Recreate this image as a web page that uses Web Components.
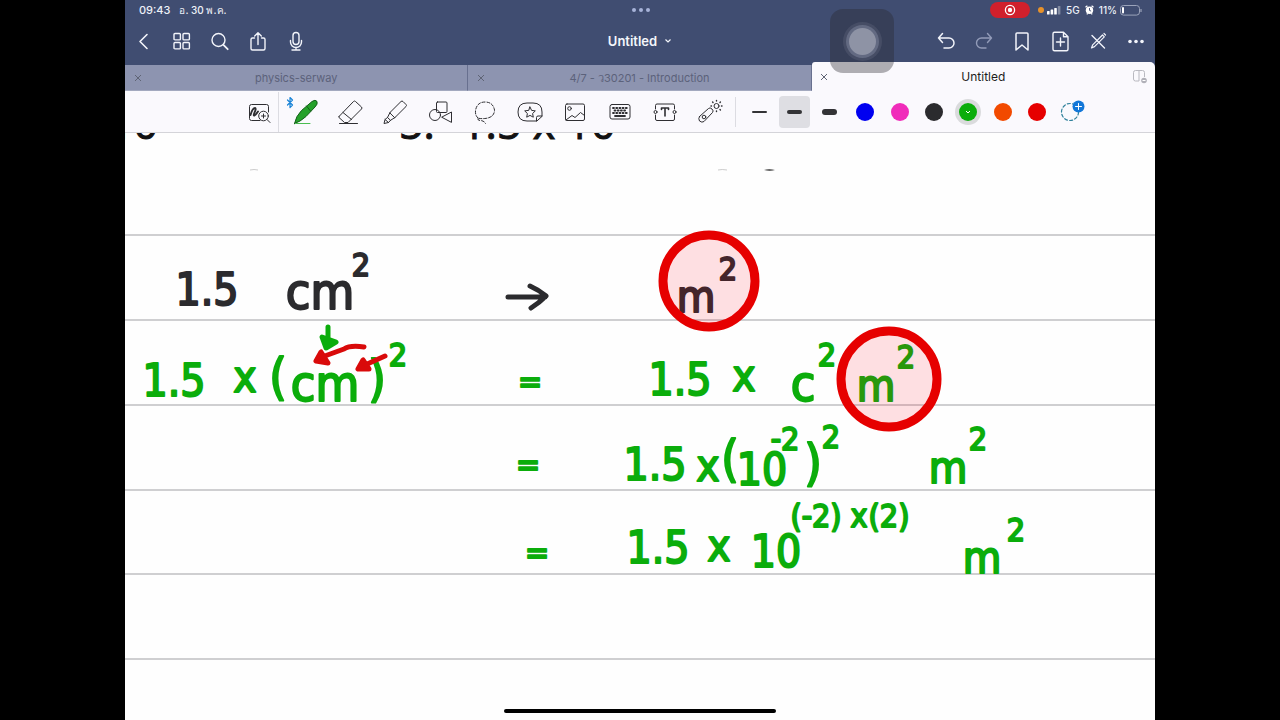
<!DOCTYPE html>
<html lang="th">
<head>
<meta charset="utf-8">
<title>Untitled</title>
<style>
  body { margin: 0; background: #000; font-family: Inter, "Noto Sans", sans-serif; }
</style>
</head>
<body>
<note-app></note-app>
<script>
const define = (name, html) => {
  const template = document.createElement('template');
  template.innerHTML = html;
  customElements.define(name, class extends HTMLElement {
    constructor() {
      super();
      this.attachShadow({ mode: 'open' }).append(template.content.cloneNode(true));
    }
    connectedCallback() {
      const button = this.shadowRoot.querySelector('button');
      if (button && this.hasAttribute('label')) button.setAttribute('aria-label', this.getAttribute('label'));
    }
  });
};

define('icon-button', `
<style>
  :host { display: block; flex: none; width: 38px; height: 38px; color: #f2f4fa; }
  button { all: unset; box-sizing: border-box; width: 100%; height: 100%; display: grid; place-items: center; }
  ::slotted(svg) { display: block; width: 24px; height: 24px; overflow: visible; fill: none; stroke: currentColor; stroke-width: 1.4; stroke-linecap: round; stroke-linejoin: round; }
</style>
<button type="button"><slot></slot></button>`);

define('status-bar', `
<style>
  :host { display: grid; grid-template-columns: 1fr auto 1fr; align-items: center; height: 20px; padding: 0 13px 0 14px; color: #eef1f8; font-size: 11px; font-weight: 500; }
  .left { display: flex; gap: 9px; align-items: baseline; line-height: 20px; }
  .left span:last-child { font-size: 10px; }
  .dots { display: flex; gap: 3px; }
  .dots i { width: 4px; height: 4px; border-radius: 50%; background: #a7b3d9; }
  .right { display: flex; justify-content: flex-end; align-items: center; gap: 5px; font-size: 10px; }
  .rec { width: 40px; height: 16px; border-radius: 8px; background: #d0202c; display: grid; place-items: center; margin-right: 3px; }
  .mic { width: 6px; height: 6px; border-radius: 50%; background: #e8922a; margin-right: -2px; }
  svg { display: block; }
  .bat { margin-left: -2px; }
</style>
<div class="left"><span>09:43</span><span>อ. 30 พ.ค.</span></div>
<div class="dots"><i></i><i></i><i></i></div>
<div class="right">
  <span class="rec"><svg width="12" height="12" viewBox="0 0 12 12"><circle cx="6" cy="6" r="4.6" fill="none" stroke="#fff" stroke-width="1.3"/><circle cx="6" cy="6" r="2.2" fill="#fff"/></svg></span>
  <i class="mic"></i>
  <svg width="14" height="9" viewBox="0 0 14 9"><g fill="#fff"><rect y="5" width="2.6" height="3.5" rx=".6"/><rect x="3.6" y="3.5" width="2.6" height="5" rx=".6"/><rect x="7.2" y="2" width="2.6" height="6.5" rx=".6"/><rect x="10.8" width="2.6" height="8.5" rx=".6" opacity=".35"/></g></svg>
  <span>5G</span>
  <svg width="9" height="10" viewBox="0 0 9 10"><circle cx="4.5" cy="5.2" r="3.7" fill="#fff"/><path d="M.5 2.2 2.4.8M8.5 2.2 6.6.8M1.8 9.4l.9-1M7.2 9.4l-.9-1" stroke="#fff" stroke-width="1.3"/><path d="M4.5 3v2.4l1.6.7" fill="none" stroke="#404d71" stroke-width=".9"/></svg>
  <span>11%</span>
  <svg class="bat" width="22" height="11" viewBox="0 0 22 11"><rect x=".5" y=".5" width="19" height="9.6" rx="3" fill="none" stroke="#9ba3ba"/><rect x="2" y="2" width="2" height="6.6" rx="1" fill="#fff"/><path d="M21 4v3" stroke="#9ba3ba" stroke-width="1.2"/></svg>
</div>`);

define('nav-bar', `
<style>
  :host { display: grid; grid-template-columns: 1fr auto 1fr; align-items: center; height: 42px; }
  .group { display: flex; }
  .end { justify-content: flex-end; }
  .title { all: unset; display: flex; align-items: center; gap: 7px; color: #f4f6fb; font-size: 13px; font-weight: 600; line-height: 16px; }
  .faded { color: #929bb8; }
</style>
<div class="group">
  <icon-button label="Back"><svg viewBox="0 0 24 24"><path d="M15 5.500 8 12.500l7 7" stroke-width="1.6"/></svg></icon-button>
  <icon-button label="Thumbnails"><svg viewBox="0 0 24 24"><rect x="4" y="4.500" width="6.4" height="6.4" rx="1"/><rect x="13" y="4.500" width="6.4" height="6.4" rx="1"/><rect x="4" y="13.500" width="6.4" height="6.4" rx="1"/><rect x="13" y="13.500" width="6.4" height="6.4" rx="1"/></svg></icon-button>
  <icon-button label="Search"><svg viewBox="0 0 24 24"><circle cx="10.500" cy="11" r="6.500"/><path d="m15.400 15.900 4.300 4.300" stroke-width="1.8"/></svg></icon-button>
  <icon-button label="Share"><svg viewBox="0 0 24 24"><path d="M8.500 9H6.500Q5 9 5 10.500v9q0 1.500 1.500 1.500h11q1.500 0 1.500-1.500v-9Q19 9 17.500 9H15.500M12 15.500V4M8.700 7 12 3.700 15.300 7"/></svg></icon-button>
  <icon-button label="Record"><svg viewBox="0 0 24 24"><rect x="9" y="3.500" width="6" height="12" rx="3"/><path d="M6.500 11.500v1.500a5.500 5.500 0 0 0 11 0v-1.500M12 18.500v2.500M8 21h8"/></svg></icon-button>
</div>
<button class="title" type="button">Untitled <svg width="8" height="6" viewBox="0 0 8 6"><path d="m1.500 1.500 2.500 2.500 2.500-2.500" fill="none" stroke="currentColor" stroke-width="1.200"/></svg></button>
<div class="group end">
  <icon-button label="Undo"><svg viewBox="0 0 24 24"><path d="M8.500 4.500 4.500 9 8.500 13.500M4.500 9h10.500a5 5 0 0 1 0 10H10" stroke-width="1.500"/></svg></icon-button>
  <icon-button label="Redo" class="faded"><svg viewBox="0 0 24 24"><path d="M15.500 4.500 19.500 9 15.500 13.500M19.500 9H9.500a5 5 0 0 0 0 10H14"/></svg></icon-button>
  <icon-button label="Bookmark"><svg viewBox="0 0 24 24"><path d="M6 5Q6 4 7 4h10q1 0 1 1V21l-6-5-6 5Z" stroke-width="1.500"/></svg></icon-button>
  <icon-button label="Add page"><svg viewBox="0 0 24 24"><path d="M15.500 3.200H6.500Q5 3.200 5 4.700v15.500q0 1.500 1.500 1.500h12q1.500 0 1.500-1.500V7.700ZM15.500 3.200v4.500h4.500M12.500 9v8M8.500 13h8"/></svg></icon-button>
  <icon-button label="Pen off"><svg viewBox="0 0 24 24"><path d="m6 6.500 12.500 12.500"/><path d="m5.500 19 1.200-3.200L16.500 6l1.800 1.800-9.800 9.800ZM18 4.500l1.500 1.500" stroke-width="1.200"/></svg></icon-button>
  <icon-button label="More"><svg viewBox="0 0 24 24"><g fill="currentColor" stroke="none"><circle cx="6" cy="12.500" r="1.800"/><circle cx="12" cy="12.500" r="1.800"/><circle cx="18" cy="12.500" r="1.800"/></g></svg></icon-button>
</div>`);

define('doc-tab', `
<style>
  :host { display: grid; grid-template-columns: 25px 1fr 25px; align-items: center; box-sizing: border-box; height: 26px; background: #8d94b0; color: #5c627b; font-size: 11px; line-height: 16px; border-right: 1px solid #68708f; border-bottom: 1px solid #a3a9bf; }
  :host([active]) { height: 29px; background: #faf9fd; color: #1d1d20; font-size: 12px; border: 0; border-radius: 3px 5px 0 0; }
  button { all: unset; display: grid; place-items: center; height: 24px; }
  a { color: inherit; text-decoration: none; text-align: center; white-space: nowrap; }
</style>
<button type="button" aria-label="Close tab"><svg width="8" height="8" viewBox="0 0 8 8"><path d="m1 1 6 6M7 1 1 7" stroke="#5f6475"/></svg></button>
<a href="#"><slot></slot></a>
<slot name="end"></slot>`);

define('tab-strip', `
<style>
  :host { display: grid; grid-template-columns: repeat(3, 1fr); align-items: end; height: 29px; }
  svg { display: block; }
</style>
<doc-tab>physics-serway</doc-tab>
<doc-tab>4/7 - ว30201 - Introduction</doc-tab>
<doc-tab active>Untitled
  <svg slot="end" width="17" height="15" viewBox="0 0 17 15" fill="none" stroke="#b9b9c0"><path d="M9 12H5.500Q3.500 12 3.500 10V3.500q0-2 2-2h7q2 0 2 2V8M9 1.500V12"/><circle cx="14" cy="11.500" r="2.800" fill="#b0b0b8" stroke="none"/><path d="M12.500 11.500h3" stroke="#fff"/></svg>
</doc-tab>`);

define('tool-bar', `
<style>
  :host { display: flex; align-items: center; box-sizing: border-box; height: 42px; padding-left: 115px; background: #faf9fd; border-bottom: 1px solid #d4d4d9; }
  icon-button { width: 45px; height: 40px; color: #2e2e32; }
  icon-button.first { width: 39px; box-sizing: border-box; margin-right: 3px; border-right: 1px solid #dcdce2; }
  icon-button svg { width: 28px; height: 28px; stroke-width: 1; }
  hr { width: 1px; height: 30px; margin: 0 6px 0 3px; border: 0; background: #dcdce2; }
  .sizes { display: flex; margin-right: 1px; }
  .sizes label, .colors label { display: grid; place-items: center; height: 32px; }
  .sizes label { width: 31px; margin: 0 2px; border-radius: 4px; }
  .sizes label:has(:checked) { background: #dedee3; }
  input { appearance: none; margin: 0; }
  .sizes input { width: 15px; height: var(--h); border-radius: 3px; background: #333336; }
  .colors { display: grid; width: 241px; grid-template-columns: repeat(7, 1fr); justify-items: center; }
  .colors input { width: 18px; height: 18px; border-radius: 50%; background: var(--c); grid-area: 1 / 1; }
  .colors input:checked { box-shadow: 0 0 0 4px #dadbdd; }
  .colors label svg { grid-area: 1 / 1; z-index: 1; }
  .colors icon-button { width: 34px; height: 32px; }
</style>
<icon-button class="first" label="Zoom window"><svg viewBox="0 0 28 28"><path d="M15 22.500H6.500q-2 0-2-2v-12q0-2 2-2h15q2 0 2 2V14"/><path d="M5.500 17q2-7 4.500-7 1.500.5-.5 4.500-1.500 3.500 0 3 1-.5 3.500-4" stroke-width="1.900"/><circle cx="18.500" cy="18" r="4.800"/><path d="m22 21.500 3 3M16.500 18h4M18.500 16v4"/></svg></icon-button>
<icon-button label="Pen"><svg viewBox="0 0 28 28"><path d="m-3.500 2 5 5L-1 9.500v-10L1.500 2l-5 5" stroke="#1883d6" stroke-width="1.200"/><path d="M3.500 25.500Q5 18 10.500 12.500L21 3.500q3.500-2.500 5 0 1 2.500-2 5.500L15 18.500Q9 24 3.500 25.500Z" fill="#25a12a" stroke="#14611a"/><path d="m15.500 8 4 5" stroke="#14611a"/><path d="M5 25.500h14" stroke="#49bd50"/></svg></icon-button>
<icon-button label="Eraser"><svg viewBox="0 0 28 28"><path d="M3 18.500 17.500 3.500q1-1 2 0l6 5.500q1 1 0 2L12 24.500H8.500L3 19.500q-.700-.500 0-1ZM7 14.500l8.500 7M3.500 25.500h18"/></svg></icon-button>
<icon-button label="Highlighter"><svg viewBox="0 0 28 28"><path d="m9 14.500 11-11q1-1 2 0l3 3q1 1 0 2l-11 11ZM9 14.500l-2.500 5 3 2.800 4.500-2.800M6.500 19.500 4 21.500l-1 4 4.500-1 2-2.200M4 21.500 7.500 24.500"/></svg></icon-button>
<icon-button label="Shapes"><svg viewBox="0 0 28 28"><rect x="10.500" y="4" width="10.500" height="10.500" rx="1"/><circle cx="9" cy="17" r="5.500"/><path d="m16 19 9.500-5v10Z"/></svg></icon-button>
<icon-button label="Lasso"><svg viewBox="0 0 28 28"><path d="M7 20Q4 17.500 4.500 12.500 6 4 14 4t9.500 8q0 7.500-9.500 8.500-5 .500-7-.500-1 2.500 2 2.500 4 0 5.500 3" stroke-dasharray="3 1.800"/></svg></icon-button>
<icon-button label="Stickers"><svg viewBox="0 0 28 28"><path d="M20.500 23H11q-9 0-9-9t9-9h6q9 0 9 9v4ZM26 18h-4q-1.500 0-1.500 1.500V23"/><path d="m14 9 1.600 3.400 3.700.500-2.700 2.600.700 3.700-3.300-1.800-3.300 1.800.700-3.700-2.700-2.600 3.700-.500Z"/></svg></icon-button>
<icon-button label="Image"><svg viewBox="0 0 28 28"><rect x="4.500" y="6" width="19" height="16.500" rx="1.500"/><circle cx="8.500" cy="10.500" r="1.800"/><path d="m5 22 6-4.500 3 2 5.500-5 4 3"/></svg></icon-button>
<icon-button label="Keyboard"><svg viewBox="0 0 28 28"><rect x="4" y="6.500" width="20" height="14.500" rx="2"/><path d="M7 10h14M8.500 12.500h12M7 15h14" stroke-width="1.800" stroke-dasharray="1 2.200"/><path d="M9 18h10" stroke-width="1.800"/></svg></icon-button>
<icon-button label="Text"><svg viewBox="0 0 28 28"><path d="M4.500 11V7.500q0-1.500 1.500-1.500h16q1.500 0 1.500 1.500V11M4.500 17v4q0 1.500 1.500 1.500h16q1.500 0 1.500-1.500v-4"/><circle cx="4.500" cy="14" r="1.500"/><circle cx="23.500" cy="14" r="1.500"/><path d="M10.500 11.500V10h7v1.500M14 10v8" stroke-width="1.600"/></svg></icon-button>
<icon-button label="Laser pointer"><svg viewBox="0 0 28 28"><path d="M3.500 18.500 12.500 10.500q1.500-1.500 3.500.5t.5 3.500L8 23.500q-2 1.500-4.500-.5-1.500-2.500 0-4.500Z"/><circle cx="8" cy="19" r="1.800"/><circle cx="20.500" cy="8" r="2.500"/><path d="M20.500 3v-.5M20.500 13v.5M15.500 8H15M25.500 8h.5M17 4.500l-.4-.4M24 4.500l.4-.4M24 11.500l.4.4" stroke-width="1.400"/></svg></icon-button>
<hr>
<div class="sizes">
  <label><input type="radio" name="size" aria-label="Thin" style="--h:2px"></label>
  <label><input type="radio" name="size" aria-label="Medium" style="--h:4px" checked></label>
  <label><input type="radio" name="size" aria-label="Thick" style="--h:6px"></label>
</div>
<div class="colors">
  <label><input type="radio" name="color" aria-label="Blue" style="--c:#0000f0"></label>
  <label><input type="radio" name="color" aria-label="Pink" style="--c:#f02cba"></label>
  <label><input type="radio" name="color" aria-label="Black" style="--c:#2b2b2e"></label>
  <label><input type="radio" name="color" aria-label="Green" style="--c:#0bad0b" checked><svg width="8" height="6" viewBox="0 0 8 6"><path d="m2 2 2 2 2-2" fill="none" stroke="#fff"/></svg></label>
  <label><input type="radio" name="color" aria-label="Orange" style="--c:#f24a00"></label>
  <label><input type="radio" name="color" aria-label="Red" style="--c:#e60000"></label>
  <icon-button label="Add color"><svg viewBox="0 0 28 28"><circle cx="12" cy="14" r="8.500" stroke="#2f819b" stroke-width="1.200" stroke-dasharray="3 2.300"/><circle cx="20.500" cy="8.500" r="6" fill="#1277d8" stroke="none"/><path d="M17.500 8.500h6M20.500 5.500v6" stroke="#fff"/></svg></icon-button>
</div>`);

/* Ruled page; ink objects sit freely on it, in page units. */
define('note-page', `
<style>
  :host { display: block; overflow: hidden; background: #fefefe; }
  svg { display: block; width: 100%; }
  .rule { stroke: #cfcfd1; stroke-width: 2; }
  .print { font-family: "Open Sans", sans-serif; font-size: 43px; fill: #111; stroke: #111; stroke-width: 1; }
  .ink { font-family: "DejaVu Sans Condensed", sans-serif; text-anchor: middle; stroke-width: 2; stroke-linejoin: round; paint-order: stroke; }
  .black { fill: #2b2b2e; stroke: #2b2b2e; }
  .green { fill: #0bad0b; stroke: #0bad0b; }
  .big { font-size: 50px; }
  .mid { font-size: 44px; }
  .sup { font-size: 32px; }
  .ring { fill: #ff001a; fill-opacity: .12; stroke: #e60000; stroke-width: 9; }
  .stroke { stroke-linecap: round; stroke-linejoin: round; stroke-width: 5; }
</style>
<svg viewBox="125 133 1030 587">
  <path class="rule" d="M125 235h1030M125 320h1030M125 405h1030M125 490h1030M125 574h1030M125 659h1030"/>
  <g class="print">
    <text x="109" y="139">10</text>
    <text x="399" y="139">5.</text>
    <text x="461" y="139">1.5 x 10</text>
  </g>
  <path d="M250 170q4-1 8 0M718 170q4-1 9 0" stroke="#ccc" fill="none"/>
  <path d="M764 170q5-1.500 11 0-5 1.500-11 0Z" fill="#333"/>
  <g class="ink black">
    <text class="mid" x="207" y="305">1.5</text>
    <text class="big" x="320" y="309">cm</text>
    <text class="sup" x="361" y="276">2</text>
    <text class="mid" x="696" y="312">m</text>
    <text class="sup" x="728" y="280">2</text>
  </g>
  <path class="stroke" d="M508 297h37M530 286q9 4 16 10-7 7-15 12" fill="none" stroke="#2b2b2e"/>
  <g class="ink green">
    <text class="mid" x="174" y="396">1.5</text>
    <text class="mid" x="245" y="392">x</text>
    <text class="big" x="278" y="394">(</text>
    <text class="big" x="325" y="401">cm</text>
    <text class="big" x="377" y="396">)</text>
    <text class="sup" x="398" y="366">2</text>
    <text class="sup" x="530" y="393">=</text>
    <text class="mid" x="680" y="395">1.5</text>
    <text class="mid" x="744" y="391">x</text>
    <text class="big" x="803" y="401">c</text>
    <text class="sup" x="827" y="366">2</text>
    <text class="mid" x="876" y="401">m</text>
    <text class="sup" x="906" y="368">2</text>
    <text class="sup" x="528" y="476">=</text>
    <text class="mid" x="655" y="480">1.5</text>
    <text class="mid" x="708" y="481">x</text>
    <text class="big" x="730" y="476">(</text>
    <text class="mid" x="762" y="485">10</text>
    <text class="sup" x="785" y="450">-2</text>
    <text class="big" x="813" y="480">)</text>
    <text class="sup" x="831" y="448">2</text>
    <text class="mid" x="948" y="483">m</text>
    <text class="sup" x="978" y="450">2</text>
    <text class="sup" x="537" y="564">=</text>
    <text class="mid" x="658" y="563">1.5</text>
    <text class="mid" x="719" y="561">x</text>
    <text class="mid" x="776" y="567">10</text>
    <text class="sup" x="816" y="527">(-2)</text>
    <text class="sup" x="859" y="527">x</text>
    <text class="sup" x="889" y="527">(2)</text>
    <text class="mid" x="982" y="573">m</text>
    <text class="sup" x="1016" y="541">2</text>
  </g>
  <path class="stroke" d="M328 327v17M322 337l4 11 10-6Z" fill="#0bad0b" stroke="#0bad0b"/>
  <g class="stroke" stroke="#d90a0a">
    <path d="M364 347q-14-2-20 2l-22 8" fill="none"/><path d="m321 352-5 9 12 2Z" fill="#d90a0a"/>
    <path d="M385 356 365 365" fill="none"/><path d="m363 360-5 9 11 0Z" fill="#d90a0a"/>
  </g>
  <circle class="ring" cx="709" cy="281" r="46"/>
  <circle class="ring" cx="889" cy="379" r="48"/>
  <path d="M506 711h268" stroke="#000" stroke-width="4" stroke-linecap="round"/>
</svg>`);

define('assistive-touch', `
<style>
  :host { display: block; width: 64px; height: 64px; }
  button { all: unset; display: grid; place-items: center; width: 100%; height: 100%; border-radius: 13px; background: rgba(40, 40, 44, .36); }
  span { width: 27px; height: 27px; border-radius: 50%; background: #8e93a5; box-shadow: 0 0 0 3px #636a82, 0 0 0 6px #464d65; }
</style>
<button type="button" aria-label="AssistiveTouch"><span></span></button>`);

define('note-app', `
<style>
  :host { display: block; position: relative; margin: 0 125px; background: #fefefe; }
  header { background: #404d71; }
  assistive-touch { position: absolute; right: 261px; top: 9px; }
</style>
<header><status-bar></status-bar><nav-bar></nav-bar><tab-strip></tab-strip></header>
<tool-bar></tool-bar>
<note-page></note-page>
<assistive-touch></assistive-touch>`);
</script>
</body>
</html>
